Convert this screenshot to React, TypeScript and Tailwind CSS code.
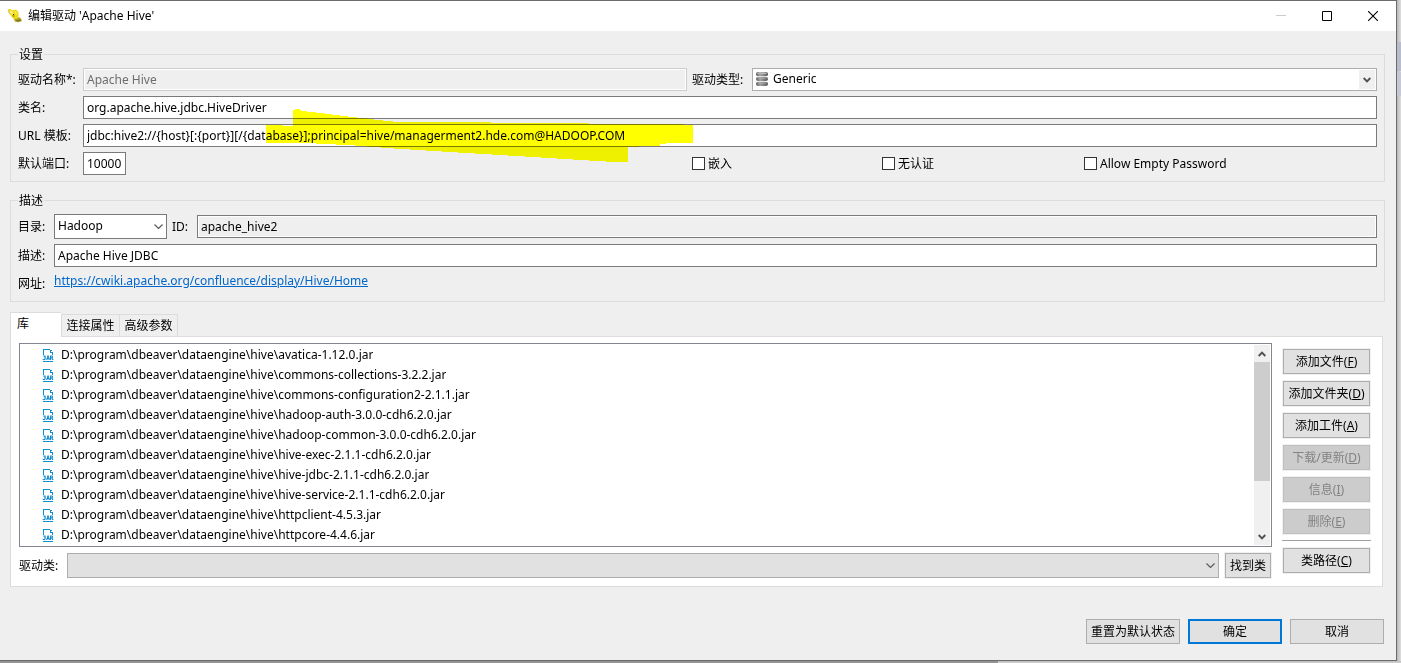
import type { ReactNode } from "react";

const libraries = [
  "avatica-1.12.0.jar",
  "commons-collections-3.2.2.jar",
  "commons-configuration2-2.1.1.jar",
  "hadoop-auth-3.0.0-cdh6.2.0.jar",
  "hadoop-common-3.0.0-cdh6.2.0.jar",
  "hive-exec-2.1.1-cdh6.2.0.jar",
  "hive-jdbc-2.1.1-cdh6.2.0.jar",
  "hive-service-2.1.1-cdh6.2.0.jar",
  "httpclient-4.5.3.jar",
  "httpcore-4.4.6.jar",
];

const fileActions = [
  { label: "添加文件", hotkey: "F", disabled: false },
  { label: "添加文件夹", hotkey: "D", disabled: false },
  { label: "添加工件", hotkey: "A", disabled: false },
  { label: "下载/更新", hotkey: "D", disabled: true },
  { label: "信息", hotkey: "I", disabled: true },
  { label: "删除", hotkey: "E", disabled: true },
];

const inputClass = "block h-[23px] w-full border border-[#7a7a7a] bg-white px-[3px] outline-none";
const buttonBase = "h-[25px] whitespace-nowrap bg-[#e1e1e1] text-center";
const buttonClass = `${buttonBase} border border-[#adadad] disabled:border-[#bfbfbf] disabled:bg-[#cccccc] disabled:text-[#838383]`;
const defaultButtonClass = `${buttonBase} border-2 border-[#0078d7]`;

function BeaverIcon() {
  return (
    <svg viewBox="0 0 16 16" className="h-4 w-4" aria-hidden="true">
      <path d="M1 1.5 3 .8l2.400 1.400L9 1.500l2.200 2.200.6 4.300-1.600 3.600-3.400-.4-2.600-3L1.600 5z" fill="#f0dc1e" />
      <path d="M3 2.500 6 4l-.6 2.600L3 4.800zM8 2.800l1.600 1.600-.8 2z" fill="#fff27a" />
      <path d="M5 7.500 7 6.600l1 1.600-1.400 1.400z" fill="#c4a800" />
      <rect x="6" y="6" width="1" height="1" fill="#3b3510" />
      <path d="M7 11l3-.6 2-1.400 1.600 1.200L15 13l-3.400 1.200L8 13.800z" fill="#b5a61c" />
      <path d="M9 12.400h5M10.500 13.800l3-3" stroke="#6f6a35" strokeWidth=".8" fill="none" />
      <path d="M1 1.500 2.800 6" stroke="#c9b89a" strokeWidth=".8" />
    </svg>
  );
}

function DatabaseIcon() {
  return (
    <svg viewBox="0 0 12 14" className="h-3.5 w-3" aria-hidden="true">
      <defs>
        <linearGradient id="disk" x1="0" x2="1">
          <stop offset="0" stopColor="#5f5f5f" />
          <stop offset=".35" stopColor="#a2a2a2" />
          <stop offset="1" stopColor="#5a5a5a" />
        </linearGradient>
      </defs>
      <rect x="0" y="0" width="12" height="4.200" rx="2" fill="url(#disk)" />
      <rect x="0" y="4.900" width="12" height="4.200" rx="2" fill="url(#disk)" />
      <rect x="0" y="9.800" width="12" height="4.200" rx="2" fill="url(#disk)" />
      <ellipse cx="6" cy="1.300" rx="4.800" ry="1" fill="#b9b9b9" />
      <path d="M1.500 5.800q4.500 1 9 0M1.500 10.700q4.500 1 9 0" stroke="#b0b0b0" strokeWidth=".9" fill="none" />
    </svg>
  );
}

function JarIcon() {
  return (
    <svg viewBox="0 0 12 13" className="h-[13px] w-3 shrink-0 overflow-visible" aria-hidden="true">
      <path
        d="M1.500 6V.5H8M8.500 1v2.500H11M9.500 1.500l1 1M10.500 3v3"
        fill="none"
        stroke="#0b8fd0"
        shapeRendering="crispEdges"
      />
      <text x="6" y="11" textAnchor="middle" fontSize="6" fontWeight="700" fill="#0080c8" stroke="#0080c8" strokeWidth=".2" fontFamily="DejaVu Sans Mono, monospace">
        JAR
      </text>
      <path d="M1 12.500h10" stroke="#0b8fd0" shapeRendering="crispEdges" />
    </svg>
  );
}

function ThinChevron() {
  return (
    <svg viewBox="0 0 9 5" className="h-[5px] w-[9px]" aria-hidden="true">
      <path d="M.5.5l4 4 4-4" fill="none" stroke="#5c5c5c" strokeWidth="1.200" />
    </svg>
  );
}

function BoldChevron({ up = false }: { up?: boolean }) {
  return (
    <svg viewBox="0 0 8 6" className={up ? "h-1.5 w-2 rotate-180" : "h-1.5 w-2"} aria-hidden="true">
      <path d="M.7 1 4 4.300 7.300 1" fill="none" stroke="#505050" strokeWidth="1.900" />
    </svg>
  );
}

function Group({ title, children }: { title: string; children: ReactNode }) {
  return (
    <fieldset className="min-w-0 border border-[#dcdcdc] px-[7px] pb-1.5">
      <legend className="h-4 px-px leading-[18px]">{title}</legend>
      <div className="flex flex-col gap-[5px] pt-1.5">{children}</div>
    </fieldset>
  );
}

function CheckOption({ label }: { label: string }) {
  return (
    <label className="flex items-center gap-[3px] whitespace-nowrap">
      <input type="checkbox" className="h-[13px] w-[13px] appearance-none border border-[#333333] bg-white checked:bg-[#0078d7]" />
      {label}
    </label>
  );
}

function TitleBar() {
  return (
    <header className="flex h-[30px] items-center bg-white pl-[7px]">
      <BeaverIcon />
      <h1 className="flex-1 pl-[5px]">编辑驱动 'Apache Hive'</h1>
      <button aria-label="最小化" disabled className="flex h-[30px] w-[46px] items-center justify-center">
        <svg viewBox="0 0 10 10" className="h-2.5 w-2.5"><path d="M0 4.500h10" stroke="#cccccc" /></svg>
      </button>
      <button aria-label="最大化" className="flex h-[30px] w-[46px] items-center justify-center">
        <svg viewBox="0 0 10 10" className="h-2.5 w-2.5"><path d="M.5.5h9v9h-9z" fill="none" stroke="#000" /></svg>
      </button>
      <button aria-label="关闭" className="flex h-[30px] w-[46px] items-center justify-center">
        <svg viewBox="0 0 10 10" className="h-2.5 w-2.5"><path d="M0 0l10 10M10 0L0 10" stroke="#000" strokeWidth="1.100" /></svg>
      </button>
    </header>
  );
}

function Settings() {
  return (
    <Group title="设置">
      <div className="grid grid-cols-[65px_609fr_685fr] items-center">
        <label htmlFor="name">驱动名称*:</label>
        <div className="pr-[5px]">
          <input
            id="name"
            disabled
            defaultValue="Apache Hive"
            className="block h-[23px] w-full border border-[#cccccc] bg-[#efefef] px-[3px] text-[#6d6d6d] inset-shadow-[0_0_0_1px_#ffffff]"
          />
        </div>
        <div className="flex items-center">
          <label htmlFor="kind" className="w-[60px] shrink-0">驱动类型:</label>
          <div className="relative flex-1">
            <select id="kind" className="block h-[23px] w-full appearance-none border border-[#abadb3] bg-white pl-5 pb-0.5 outline-none">
              <option>Generic</option>
            </select>
            <span className="pointer-events-none absolute top-1 left-1"><DatabaseIcon /></span>
            <span className="pointer-events-none absolute inset-y-0.5 right-0.5 flex w-4 items-center justify-center bg-[#f0f0f0]">
              <BoldChevron />
            </span>
          </div>
        </div>
      </div>
      <div className="grid grid-cols-[65px_1fr] items-center">
        <label htmlFor="class">类名:</label>
        <input id="class" defaultValue="org.apache.hive.jdbc.HiveDriver" className={inputClass} />
      </div>
      <div className="grid grid-cols-[65px_1fr] items-center">
        <label htmlFor="url">URL 模板:</label>
        <div className="relative">
          <input
            id="url"
            defaultValue="jdbc:hive2://{host}[:{port}][/{database}];principal=hive/managerment2.hde.com@HADOOP.COM"
            className={inputClass}
          />
          {/* Marker stroke that runs over the principal part of the template */}
          <svg viewBox="0 0 427 53" className="pointer-events-none absolute -top-[15px] left-[183px] h-[53px] w-[427px] mix-blend-multiply" aria-hidden="true">
            <path
              d="M0 16h17v1h10V1h2V0h5v1h1v1h6v1h9v1h9v1h7v1h8v1h8v1h9v1h10v1h7v1h9v1h10v1h98v1h98v1h95v1h9v18h-27v1h-6v2h-21v1h-11v15h-22v-1h-17v-1h-16v-1h-16v-1h-16v-1h-16v-1h-17v-1h-16v-1h-17v-1h-17v-1h-16v-1h-16v-1h-16v-1h-16v-1h-13v-1h-14v-1h-12v-1h-19v-1h-20v-1H0z"
              fill="#ffff00"
              shapeRendering="crispEdges"
            />
          </svg>
        </div>
      </div>
      <div className="grid grid-cols-[65px_609fr_685fr] items-center">
        <label htmlFor="port">默认端口:</label>
        <div className="flex">
          <input id="port" defaultValue="10000" className="h-[23px] w-[43px] border border-[#7a7a7a] bg-white px-[3px] outline-none" />
        </div>
        <div className="grid grid-cols-[190fr_202fr_293fr]">
          <CheckOption label="嵌入" />
          <CheckOption label="无认证" />
          <CheckOption label="Allow Empty Password" />
        </div>
      </div>
    </Group>
  );
}

function Description() {
  return (
    <Group title="描述">
      <div className="flex items-center">
        <label htmlFor="category" className="w-9 shrink-0">目录:</label>
        <div className="relative w-[113px] shrink-0">
          <select id="category" className="block h-[25px] w-full appearance-none border border-[#7a7a7a] bg-white pl-[3px] pb-0.5 outline-none">
            <option>Hadoop</option>
          </select>
          <span className="pointer-events-none absolute inset-y-0 right-1 flex items-center"><ThinChevron /></span>
        </div>
        <label htmlFor="driver-id" className="w-[30px] shrink-0 pl-[5px]">ID:</label>
        <input
          id="driver-id"
          readOnly
          defaultValue="apache_hive2"
          className="h-[23px] min-w-0 flex-1 border border-[#7a7a7a] bg-[#efefef] px-[3px] outline-none inset-shadow-[0_0_0_1px_#ffffff]"
        />
      </div>
      <div className="flex items-center">
        <label htmlFor="description" className="w-9 shrink-0">描述:</label>
        <input id="description" defaultValue="Apache Hive JDBC" className={inputClass} />
      </div>
      <div className="flex h-[23px]">
        <span className="w-9 shrink-0 leading-6">网址:</span>
        <a href="https://cwiki.apache.org/confluence/display/Hive/Home" className="text-[#0066cc] underline">
          https://cwiki.apache.org/confluence/display/Hive/Home
        </a>
      </div>
    </Group>
  );
}

function Libraries() {
  return (
    <section className="mr-0.5">
      <div role="tablist" className="flex h-6 items-end">
        <button role="tab" aria-selected="true" className="relative -mb-px h-[25px] w-[51px] border-t border-l border-[#dcdcdc] bg-white pl-1.5 pb-0.5 text-left">
          库
        </button>
        <button role="tab" aria-selected="false" className="h-[22px] w-[58px] border-t border-l border-[#dcdcdc]">连接属性</button>
        <button role="tab" aria-selected="false" className="h-[22px] w-[59px] border-x border-t border-[#dcdcdc]">高级参数</button>
      </div>
      <div className="flex gap-[11px] border border-[#dcdcdc] bg-white pt-1.5 pr-3 pb-2 pl-2">
        <div className="flex min-w-0 flex-1 flex-col gap-1.5">
          <div className="flex border border-[#828790] py-px pr-px">
            <ul className="min-w-0 flex-1">
              {libraries.map((file) => (
                <li key={file} className="flex h-5 items-center gap-[7px] pl-[22px]">
                  <JarIcon />
                  <span className="truncate">{"D:\\program\\dbeaver\\dataengine\\hive\\" + file}</span>
                </li>
              ))}
            </ul>
            <div className="flex w-4 flex-col bg-[#f0f0f0]" aria-hidden="true">
              <span className="flex h-[17px] items-center justify-center"><BoldChevron up /></span>
              <span className="h-[119px] bg-[#cdcdcd]" />
              <span className="flex flex-1 items-end justify-center pb-[5px]"><BoldChevron /></span>
            </div>
          </div>
          <div className="flex items-center">
            <label htmlFor="driver-class" className="w-12 shrink-0">驱动类:</label>
            <div className="relative flex-1">
              <select id="driver-class" disabled className="block h-[25px] w-full appearance-none border border-[#adadad] bg-[#e1e1e1]" />
              <span className="pointer-events-none absolute inset-y-0 right-1 flex items-center"><ThinChevron /></span>
            </div>
            <button className={`${buttonClass} mr-px ml-1.5 w-[46px] shadow-[0_0_0_1px_#f0f0f0]`}>找到类</button>
          </div>
        </div>
        <div className="flex w-[87px] flex-col gap-[7px] pt-1.5">
          {fileActions.map((action) => (
            <button key={action.label} disabled={action.disabled} className={`${buttonClass} shadow-[0_0_0_1px_#f0f0f0]`}>
              {action.label}(<u>{action.hotkey}</u>)
            </button>
          ))}
          <hr className="-mx-px -mt-px border-[#a0a0a0]" />
          <button className={`${buttonClass} shadow-[0_0_0_1px_#f0f0f0]`}>
            类路径(<u>C</u>)
          </button>
        </div>
      </div>
    </section>
  );
}

export default function App() {
  return (
    <div className="flex min-h-screen flex-col bg-[#d0d0d0] font-['Noto_Sans','Noto_Sans_CJK_SC',sans-serif] text-xs leading-[18px] text-black">
      <div className="flex flex-1">
        <main className="min-w-0 flex-1 border-t border-r border-b border-[#6b6b6b] bg-[#efefef]">
          <TitleBar />
          <div className="flex flex-col gap-2.5 pt-[15px] pr-[11px] pb-4 pl-2.5">
            <Settings />
            <Description />
            <Libraries />
            <div className="mt-[22px] mr-px flex justify-end gap-2">
              <button className={`${buttonClass} w-[94px]`}>重置为默认状态</button>
              <button className={`${defaultButtonClass} w-[94px]`}>确定</button>
              <button className={`${buttonClass} w-[94px]`}>取消</button>
            </div>
          </div>
        </main>
        <div className="flex w-1 flex-col bg-linear-to-r from-[#b8b8b8] to-[#dedede]" aria-hidden="true">
          <span className="h-[42px]" />
          <span className="h-[29px] bg-[#b9bccc]" />
          <span className="mt-px h-6 bg-[#c6c8d4]" />
        </div>
      </div>
      <div className="flex h-0.5" aria-hidden="true">
        <span className="w-[71.2%] bg-[#939393]" />
        <span className="flex-1 bg-linear-to-b from-[#bdbdbd] to-[#d2d2d2]" />
      </div>
    </div>
  );
}
